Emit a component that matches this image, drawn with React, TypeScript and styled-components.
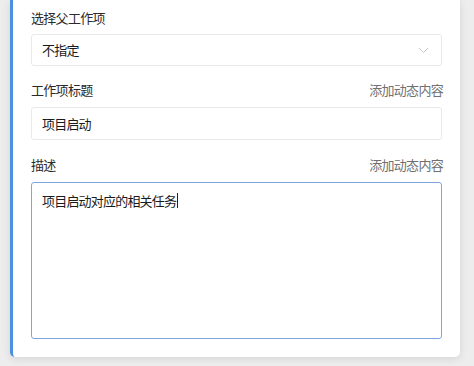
import React from "react";
import styled, { createGlobalStyle } from "styled-components";

const Global = createGlobalStyle`
  html, body { margin: 0; padding: 0; background: #ededed; }
  body { font-family: "Noto Sans CJK SC", "Noto Sans", sans-serif; }
`;

const Page = styled.div`
  width: 474px;
  height: 366px;
  padding-left: 10px;
  padding-right: 14px;
  box-sizing: border-box;
  overflow: hidden;
`;

const Card = styled.div`
  background: #fff;
  border-left: 3px solid #4a8fe0;
  border-radius: 0 0 5px 5px;
  box-shadow: 0 2px 8px rgba(0, 0, 0, 0.1);
  padding: 8px 18px 18px 18px;
  display: flex;
  flex-direction: column;
`;

const Field = styled.div<{ $gap?: number }>`
  display: flex;
  flex-direction: column;
  margin-bottom: ${(p) => p.$gap ?? 0}px;
`;

const LabelRow = styled.div<{ $mb: number }>`
  display: flex;
  justify-content: space-between;
  align-items: center;
  height: 20px;
  margin-bottom: ${(p) => p.$mb}px;
`;

const Label = styled.span`
  font-size: 13px;
  letter-spacing: -0.7px;
  color: #2a2a2a;
  line-height: 20px;
`;

const Action = styled.span`
  font-size: 13px;
  letter-spacing: -0.7px;
  color: #707070;
  line-height: 20px;
  margin-right: -1px;
`;

const Box = styled.div<{ $h: number; $focus?: boolean }>`
  box-sizing: border-box;
  height: ${(p) => p.$h}px;
  border: 1px solid ${(p) => (p.$focus ? "#7fa6dc" : "#e9e9e9")};
  border-radius: 3px;
  padding: 0 10px;
  display: flex;
  align-items: ${(p) => (p.$focus ? "flex-start" : "center")};
  justify-content: space-between;
  font-size: 13px;
  letter-spacing: -0.8px;
  color: #1a1a1a;
  background: #fff;
  ${(p) => (p.$focus ? "padding-top: 8px;" : "")}
`;

const Text = styled.span`
  line-height: 20px;
`;

const Caret = styled.span`
  display: inline-block;
  width: 1px;
  height: 15px;
  background: #222;
  vertical-align: -2px;
  margin-left: 1px;
`;

const Chevron = () => (
  <svg width="11" height="7" viewBox="0 0 11 7" style={{ marginRight: 2 }}>
    <path d="M1 1 L5.5 5.5 L10 1" fill="none" stroke="#c8c8c8" strokeWidth="1" />
  </svg>
);

export default function App() {
  return (
    <>
      <Global />
      <Page>
        <Card>
          <Field $gap={14}>
            <LabelRow $mb={6}>
              <Label>选择父工作项</Label>
            </LabelRow>
            <Box $h={32}>
              <Text>不指定</Text>
              <Chevron />
            </Box>
          </Field>
          <Field $gap={15}>
            <LabelRow $mb={7}>
              <Label>工作项标题</Label>
              <Action>添加动态内容</Action>
            </LabelRow>
            <Box $h={33}>
              <Text>项目启动</Text>
            </Box>
          </Field>
          <Field>
            <LabelRow $mb={7}>
              <Label>描述</Label>
              <Action>添加动态内容</Action>
            </LabelRow>
            <Box $h={157} $focus>
              <Text>
                项目启动对应的相关任务
                <Caret />
              </Text>
            </Box>
          </Field>
        </Card>
      </Page>
    </>
  );
}
